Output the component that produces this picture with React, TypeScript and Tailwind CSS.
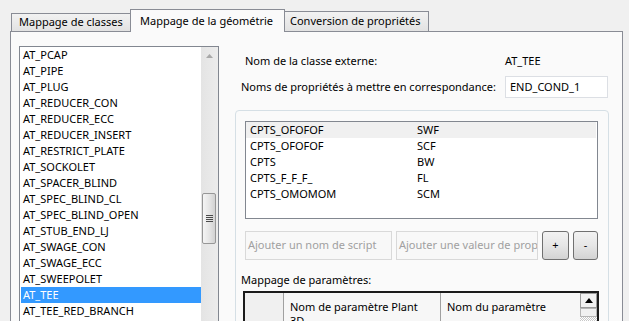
import React from 'react';

const classes = [
  'AT_PCAP',
  'AT_PIPE',
  'AT_PLUG',
  'AT_REDUCER_CON',
  'AT_REDUCER_ECC',
  'AT_REDUCER_INSERT',
  'AT_RESTRICT_PLATE',
  'AT_SOCKOLET',
  'AT_SPACER_BLIND',
  'AT_SPEC_BLIND_CL',
  'AT_SPEC_BLIND_OPEN',
  'AT_STUB_END_LJ',
  'AT_SWAGE_CON',
  'AT_SWAGE_ECC',
  'AT_SWEEPOLET',
  'AT_TEE',
  'AT_TEE_RED_BRANCH',
];

const mappings: [string, string][] = [
  ['CPTS_OFOFOF', 'SWF'],
  ['CPTS_OFOFOF', 'SCF'],
  ['CPTS', 'BW'],
  ['CPTS_F_F_F_', 'FL'],
  ['CPTS_OMOMOM', 'SCM'],
];

const SELECTED = 'AT_TEE';

const ClassList: React.FC = () => (
  <div className="flex h-[280px] w-[200px] shrink-0 border border-[#828790] bg-white">
    <div className="flex-1 overflow-hidden pl-px">
      {classes.map((c) => (
        <div
          key={c}
          className={
            c === SELECTED
              ? 'h-[16px] whitespace-nowrap bg-[#3399ff] pl-[2px] leading-[16px] text-white'
              : 'h-[16px] whitespace-nowrap pl-[2px] leading-[16px]'
          }
        >
          {c}
        </div>
      ))}
    </div>
    {/* vertical scrollbar */}
    <div className="flex w-[17px] shrink-0 flex-col bg-gradient-to-r from-[#e4e4e4] to-[#ececec]">
      <div className="flex h-[17px] items-center justify-center">
        <svg width="7" height="4" viewBox="0 0 7 4">
          <path d="M0 4 L3.5 0 L7 4 Z" fill="#a8a8a8" />
        </svg>
      </div>
      <div className="ml-px mt-[129px] flex h-[51px] w-[14px] flex-col items-center justify-center gap-px rounded-[2px] border border-[#979797] bg-gradient-to-r from-[#f5f5f5] via-[#e6e6e6] to-[#d2d2d2]">
        <div className="h-px w-[7px] bg-[#4a4a4a]" />
        <div className="h-px w-[7px] bg-[#4a4a4a]" />
        <div className="h-px w-[7px] bg-[#4a4a4a]" />
        <div className="h-px w-[7px] bg-[#4a4a4a]" />
      </div>
    </div>
  </div>
);

const WinButton: React.FC<{ label: string; className: string }> = ({ label, className }) => (
  <button
    className={
      'flex h-[29px] items-center justify-center rounded-[3px] border border-[#707070] bg-gradient-to-b from-[#f2f2f2] via-[#e6e6e6] to-[#d3d3d3] text-[11px] ' +
      className
    }
  >
    {label}
  </button>
);

const ParamTable: React.FC = () => (
  <div className="ml-[7px] mt-px flex h-[60px] w-[356px] border-2 border-[#1b1b1b] bg-white">
    <div className="w-[39px] shrink-0 border-r border-[#a0a0a0] bg-[#f0f0f0]" />
    <div className="w-[157px] shrink-0 border-r border-[#a0a0a0] bg-[#f7f7f7] pl-[6px] pt-[7px] leading-[14px]">
      Nom de paramètre Plant
      <br />
      3D
    </div>
    <div className="flex-1 bg-[#f7f7f7] pl-[6px] pt-[7px] leading-[14px]">Nom du paramètre</div>
    <div className="flex w-[17px] shrink-0 flex-col bg-[repeating-conic-gradient(#c8c8c8_0%_25%,#ffffff_0%_50%)] bg-[length:2px_2px]">
      <div className="flex h-[15px] items-center justify-center border border-[#9a9a9a] bg-[#f0f0f0]">
        <svg width="8" height="5" viewBox="0 0 8 5">
          <path d="M0 5 L4 0 L8 5 Z" fill="#000" />
        </svg>
      </div>
      <div className="h-[9px] border border-[#b5b5b5] bg-[#f0f0f0]" />
    </div>
  </div>
);

export default function App() {
  return (
    <div className="h-[321px] w-[629px] overflow-hidden bg-[#f0f0f0] font-['Noto_Sans',sans-serif] text-[11px] text-black">
      {/* tabs */}
      <div className="flex h-[31px] items-end pl-[11px]">
        <div className="flex h-[18px] w-[119px] items-center whitespace-nowrap border-l border-t border-[#898c95] bg-gradient-to-b from-[#f2f2f2] to-[#e2e2e2] pl-[7px]">
          Mappage de classes
        </div>
        <div className="relative z-10 -mb-px flex h-[23px] w-[155px] items-center whitespace-nowrap border-x border-t border-[#898c95] bg-[#fafafa] pl-[9px] pt-px">
          Mappage de la géométrie
        </div>
        <div className="flex h-[20px] w-[144px] items-center whitespace-nowrap border-r border-t border-[#898c95] bg-gradient-to-b from-[#f2f2f2] to-[#e2e2e2] pl-[5px]">
          Conversion de propriétés
        </div>
      </div>

      {/* tab page */}
      <div className="ml-[10px] flex h-[300px] w-[613px] border border-[#898c95] bg-[#fafafa] pl-[8px] pt-[14px]">
        <ClassList />

        <div className="ml-[16px] w-[374px] shrink-0">
          <div className="flex h-[30px] items-center pl-[10px]">
            <span className="w-[260px] whitespace-nowrap">Nom de la classe externe:</span>
            <span>AT_TEE</span>
          </div>
          <div className="flex h-[22px] items-center pl-[6px]">
            <span className="w-[264px] whitespace-nowrap">Noms de propriétés à mettre en correspondance:</span>
            <div className="flex h-[22px] w-[103px] items-center border border-[#dcdfe4] bg-white pl-[4px]">
              END_COND_1
            </div>
          </div>

          {/* group box */}
          <div className="mt-[12px] h-[230px] w-[374px] rounded-[4px] border border-[#d5dfe5]">
            <div className="ml-[9px] mt-[10px] h-[98px] w-[353px] border border-[#828790] bg-white">
              {mappings.map(([a, b], i) => (
                <div
                  key={i}
                  className={
                    i === 0
                      ? 'mr-px flex h-[16px] items-center bg-[#f0f0f0] pl-[4px]'
                      : 'mr-px flex h-[16px] items-center pl-[4px]'
                  }
                >
                  <span className="w-[167px]">{a}</span>
                  <span>{b}</span>
                </div>
              ))}
            </div>

            <div className="ml-[9px] mt-[12px] flex gap-[4px]">
              <div className="flex h-[29px] w-[147px] items-center overflow-hidden whitespace-nowrap border border-[#d9d9d9] bg-[#f8f8f8] pl-[2px] text-[#a0a0a0]">
                Ajouter un nom de script
              </div>
              <div className="flex h-[29px] w-[142px] items-center overflow-hidden whitespace-nowrap border border-[#d9d9d9] bg-[#f8f8f8] pl-[2px] text-[#a0a0a0]">
                Ajouter une valeur de prop
              </div>
              <WinButton label="+" className="w-[27px]" />
              <WinButton label="-" className="w-[25px]" />
            </div>

            <div className="mt-[10px] flex h-[20px] items-center pl-[5px]">Mappage de paramètres:</div>

            <ParamTable />
          </div>
        </div>
      </div>
    </div>
  );
}
